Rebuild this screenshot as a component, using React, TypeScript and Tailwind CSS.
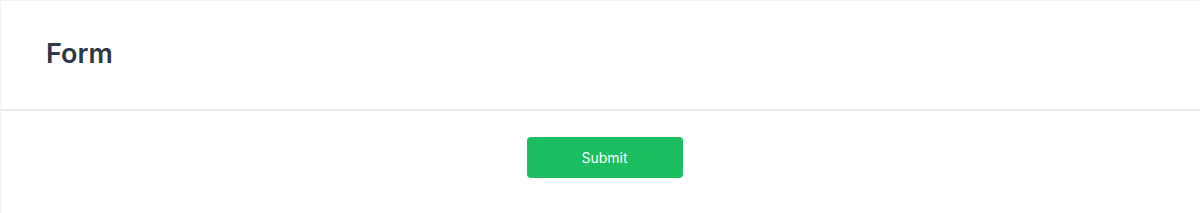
export default function App() {
  return (
    <div
      className="min-h-[213px] bg-white border-l border-t border-[#f1f2f6] text-[#2d3748]"
      style={{ fontFamily: 'Inter, "Noto Sans", sans-serif' }}
    >
      <header className="h-[110px] flex items-center px-[45px] border-b-2 border-[#e6e8f0]">
        <h1 className="text-[27px] font-semibold pb-[2px]">Form</h1>
      </header>
      <div className="flex justify-center pt-[26px] pl-[8px]">
        <button
          type="button"
          className="w-[156px] h-[41px] rounded-[4px] bg-[#1bbf5f] text-white text-sm"
        >
          Submit
        </button>
      </div>
    </div>
  );
}
